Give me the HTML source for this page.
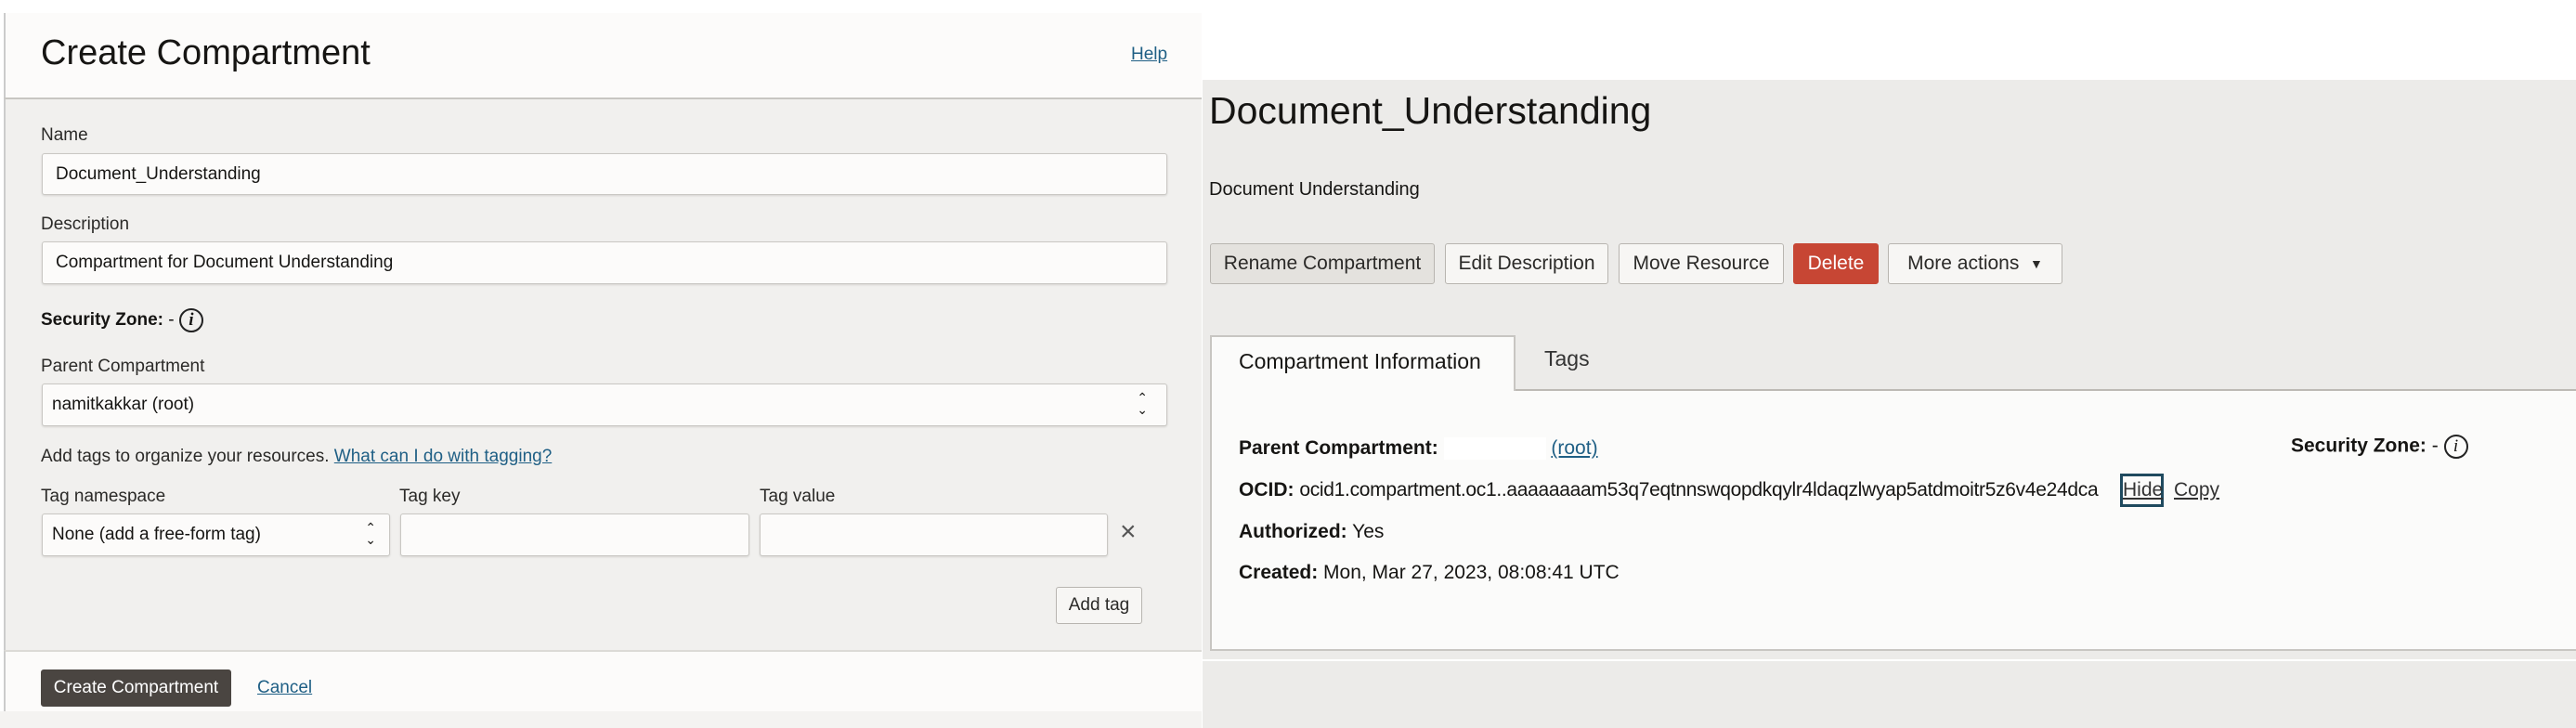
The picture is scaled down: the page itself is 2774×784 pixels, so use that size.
<!DOCTYPE html>
<html><head><meta charset="utf-8"><style>
*{box-sizing:border-box;margin:0;padding:0}
body{width:2774px;height:784px;position:relative;background:#fff;font-family:"Liberation Sans",Arial,sans-serif;color:#161513;overflow:hidden}
.a{position:absolute;white-space:nowrap}
.inp{position:absolute;background:#fcfbfa;border:1px solid #c9c7c3;border-radius:3px;box-shadow:0 1px 2px rgba(0,0,0,.12);font-size:19px;padding-left:14px;display:flex;align-items:center}
.lbl{position:absolute;font-size:19px;color:#2b2a28}
.btn{position:absolute;border:1px solid #b8b5b0;border-radius:3px;background:#f7f6f4;font-size:21px;display:flex;align-items:center;justify-content:center;color:#2b2a28}
.lnk{color:#1f5f85;text-decoration:underline}
.r{font-size:21px}
.r b{font-weight:bold}
.circ{display:inline-block;width:26px;height:26px;border:2px solid #222;border-radius:50%;text-align:center;font-style:italic;font-family:"Liberation Serif",serif;font-size:19px;line-height:22px;vertical-align:middle}
</style></head><body>
<!-- left panel -->
<div class="a" style="left:4px;top:14px;width:1290px;height:91px;background:#fcfbfa;border-left:2px solid #ccc"></div>
<div class="a" style="left:4px;top:105px;width:1290px;height:595px;background:#f1f0ee;border-top:2px solid #c8c6c2;border-left:2px solid #ccc"></div>
<div class="a" style="left:4px;top:700px;width:1290px;height:66px;background:#fcfbfa;border-top:2px solid #dcdad6;border-left:2px solid #ccc"></div>
<div class="a" style="left:0;top:766px;width:1294px;height:18px;background:#f4f3f1"></div>
<div class="a" style="left:44px;top:36px;font-size:38px;color:#161513">Create Compartment</div>
<div class="a lnk" style="left:1218px;top:48px;font-size:19px">Help</div>
<div class="lbl" style="left:44px;top:135px">Name</div>
<div class="inp" style="left:45px;top:165px;width:1212px;height:45px">Document_Understanding</div>
<div class="lbl" style="left:44px;top:231px">Description</div>
<div class="inp" style="left:45px;top:260px;width:1212px;height:46px">Compartment for Document Understanding</div>
<div class="a" style="left:44px;top:332px;font-size:19px;font-weight:bold">Security Zone: <span style="font-weight:normal">-</span> <span class="circ">i</span></div>
<div class="lbl" style="left:44px;top:384px">Parent Compartment</div>
<div class="inp" style="left:45px;top:413px;width:1212px;height:46px;padding-left:10px">namitkakkar (root)<span style="position:absolute;right:20px;top:8px;font-size:14px;line-height:13px">&#8963;<br>&#8964;</span></div>
<div class="a" style="left:44px;top:481px;font-size:19px;color:#2b2a28">Add tags to organize your resources. <span class="lnk">What can I do with tagging?</span></div>
<div class="lbl" style="left:44px;top:524px">Tag namespace</div>
<div class="lbl" style="left:430px;top:524px">Tag key</div>
<div class="lbl" style="left:818px;top:524px">Tag value</div>
<div class="inp" style="left:45px;top:553px;width:375px;height:46px;padding-left:10px">None (add a free-form tag)<span style="position:absolute;right:14px;top:8px;font-size:14px;line-height:13px">&#8963;<br>&#8964;</span></div>
<div class="inp" style="left:431px;top:553px;width:376px;height:46px"></div>
<div class="inp" style="left:818px;top:553px;width:375px;height:46px"></div>
<div class="a" style="left:1206px;top:556px;font-size:30px;color:#555">&#215;</div>
<div class="btn" style="left:1137px;top:632px;width:93px;height:40px;font-size:19px">Add tag</div>
<div class="btn" style="left:44px;top:721px;width:205px;height:40px;background:#4a4541;color:#fff;border-color:#4a4541;font-size:19px">Create Compartment</div>
<div class="a lnk" style="left:277px;top:730px;font-size:19px">Cancel</div>

<!-- right panel -->
<div class="a" style="left:1295px;top:86px;width:1479px;height:624px;background:#ecebe9"></div>
<div class="a" style="left:1295px;top:712px;width:1479px;height:72px;background:#ecebe9"></div>
<div class="a" style="left:1302px;top:96px;font-size:41px">Document_Understanding</div>
<div class="a" style="left:1302px;top:193px;font-size:20px">Document Understanding</div>
<div class="btn" style="left:1303px;top:262px;width:242px;height:44px;background:#e4e2de">Rename Compartment</div>
<div class="btn" style="left:1556px;top:262px;width:176px;height:44px">Edit Description</div>
<div class="btn" style="left:1743px;top:262px;width:178px;height:44px">Move Resource</div>
<div class="btn" style="left:1931px;top:262px;width:92px;height:44px;background:#c74634;border-color:#c74634;color:#fff">Delete</div>
<div class="btn" style="left:2033px;top:262px;width:188px;height:44px">More actions &nbsp;<span style="font-size:14px">&#9660;</span></div>
<div class="a" style="left:1303px;top:419px;width:1471px;height:282px;background:#fbfbfa;border-top:2px solid #bdbab5;border-left:2px solid #c8c6c2;border-bottom:2px solid #c8c6c2"></div>
<div class="a" style="left:1303px;top:361px;width:329px;height:60px;background:#fbfbfa;border:2px solid #c8c6c2;border-bottom:none"></div>
<div class="a" style="left:1334px;top:376px;font-size:23px">Compartment Information</div>
<div class="a" style="left:1663px;top:373px;font-size:23px;color:#333">Tags</div>
<div class="a r" style="left:1334px;top:471px"><b>Parent Compartment:</b> <span style="display:inline-block;width:110px;height:24px;background:#fff;vertical-align:middle"></span> <span class="lnk">(root)</span></div>
<div class="a r" style="left:2467px;top:468px"><b>Security Zone:</b> - <span class="circ">i</span></div>
<div class="a r" style="left:1334px;top:516px"><b>OCID:</b> <span style="letter-spacing:-0.3px">ocid1.compartment.oc1..aaaaaaaam53q7eqtnnswqopdkqylr4ldaqzlwyap5atdmoitr5z6v4e24dca</span></div>
<div class="a lnk r" style="left:2283px;top:510px;width:47px;height:36px;border:3px solid #1f4a5f;text-align:center;line-height:30px;color:#333">Hide</div>
<div class="a lnk r" style="left:2341px;top:516px;color:#333">Copy</div>
<div class="a r" style="left:1334px;top:561px"><b>Authorized:</b> Yes</div>
<div class="a r" style="left:1334px;top:605px"><b>Created:</b> Mon, Mar 27, 2023, 08:08:41 UTC</div>
</body></html>
